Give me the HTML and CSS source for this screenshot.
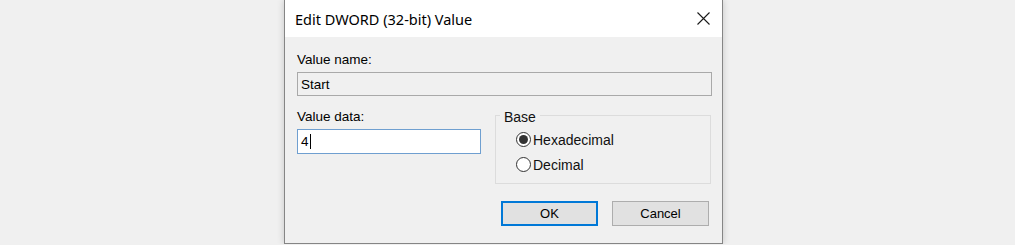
FILE: index.html
```html
<!DOCTYPE html>
<html>
<head>
<meta charset="utf-8">
<link rel="stylesheet" href="styles.css">
</head>
<body>
<div class="dialog">
  <div class="titlebar">
    <span class="title">Edit DWORD (32-bit) Value</span>
    <svg class="close" width="13" height="13" viewBox="0 0 13 13"><path d="M0.5 0.5 L12.5 12.5 M12.5 0.5 L0.5 12.5" stroke="#1a1a1a" stroke-width="1.1" fill="none"/></svg>
  </div>
  <div class="content">
    <div class="label">Value name:</div>
    <div class="field readonly">Start</div>
    <div class="row">
      <div class="col">
        <div class="label label-data">Value data:</div>
        <div class="field input">4<span class="caret"></span></div>
      </div>
      <div class="group">
        <div class="legend">Base</div>
        <div class="radio"><span class="circle checked"></span><span class="rtext">Hexadecimal</span></div>
        <div class="radio"><span class="circle"></span><span class="rtext">Decimal</span></div>
      </div>
    </div>
    <div class="buttons">
      <div class="btn default">OK</div>
      <div class="btn">Cancel</div>
    </div>
  </div>
</div>
</body>
</html>
```

FILE: styles.css
```css
html, body {
  margin: 0;
  padding: 0;
  background: #f0f0f0;
}
body {
  font-family: "Liberation Sans", Arial, sans-serif;
  color: #000;
  overflow: hidden;
}
.dialog {
  margin-left: 284px;
  width: 439px;
  height: 244px;
  box-sizing: border-box;
  border: 1px solid #858585;
  border-top: none;
  background: #f0f0f0;
  box-shadow: 0 0 7px rgba(0, 0, 0, 0.18);
  display: flex;
  flex-direction: column;
}
.titlebar {
  height: 37px;
  flex: none;
  background: #ffffff;
  display: flex;
  align-items: center;
  justify-content: space-between;
  padding: 1px 12px 0 10px;
  box-sizing: border-box;
}
.title {
  font-family: "Noto Sans", sans-serif;
  font-size: 14.5px;
  line-height: 20px;
  color: #000;
}
.close {
  display: block;
  margin-top: -1px;
}
.content {
  padding: 15px 0 0 12px;
}
.label {
  font-size: 13.5px;
  line-height: 15px;
  height: 15px;
  white-space: nowrap;
}
.label-data {
  margin-top: 13px;
}
.field {
  margin-top: 5px;
  box-sizing: border-box;
  font-size: 13.5px;
  padding-left: 3px;
  display: flex;
  align-items: center;
}
.readonly {
  width: 415px;
  height: 24px;
  border: 1px solid #a9a9a9;
  background: #f0f0f0;
}
.input {
  width: 184px;
  height: 25px;
  border: 1px solid #6f9fd0;
  background: #ffffff;
}
.caret {
  display: inline-block;
  width: 1px;
  height: 15px;
  background: #000;
  margin-left: 1px;
}
.row {
  display: flex;
  align-items: flex-start;
}
.col {
  width: 184px;
}
.group {
  margin-left: 14px;
  margin-top: 19px;
  width: 216px;
  height: 69px;
  box-sizing: border-box;
  border: 1px solid #dcdcdc;
}
.legend {
  width: fit-content;
  margin: -6px 0 0 4px;
  padding: 0 4px;
  background: #f0f0f0;
  font-size: 14px;
  line-height: 15px;
  color: #111;
}
.radio {
  height: 25px;
  display: flex;
  align-items: center;
  padding-left: 20px;
}
.legend + .radio {
  margin-top: 2px;
}
.circle {
  width: 15px;
  height: 15px;
  box-sizing: border-box;
  border: 1px solid #333;
  border-radius: 50%;
  background: #fff;
  flex: none;
  display: flex;
  align-items: center;
  justify-content: center;
}
.circle.checked::after {
  content: "";
  width: 9px;
  height: 9px;
  border-radius: 50%;
  background: #333;
}
.rtext {
  margin-left: 2px;
  font-size: 14px;
  line-height: 16px;
  color: #111;
}
.buttons {
  margin-top: 17px;
  margin-right: 13px;
  display: flex;
  justify-content: flex-end;
  gap: 14px;
}
.btn {
  width: 97px;
  height: 25px;
  box-sizing: border-box;
  border: 1px solid #adadad;
  background: #e1e1e1;
  font-size: 13px;
  display: flex;
  align-items: center;
  justify-content: center;
}
.btn.default {
  border: 2px solid #0078d7;
}
```
